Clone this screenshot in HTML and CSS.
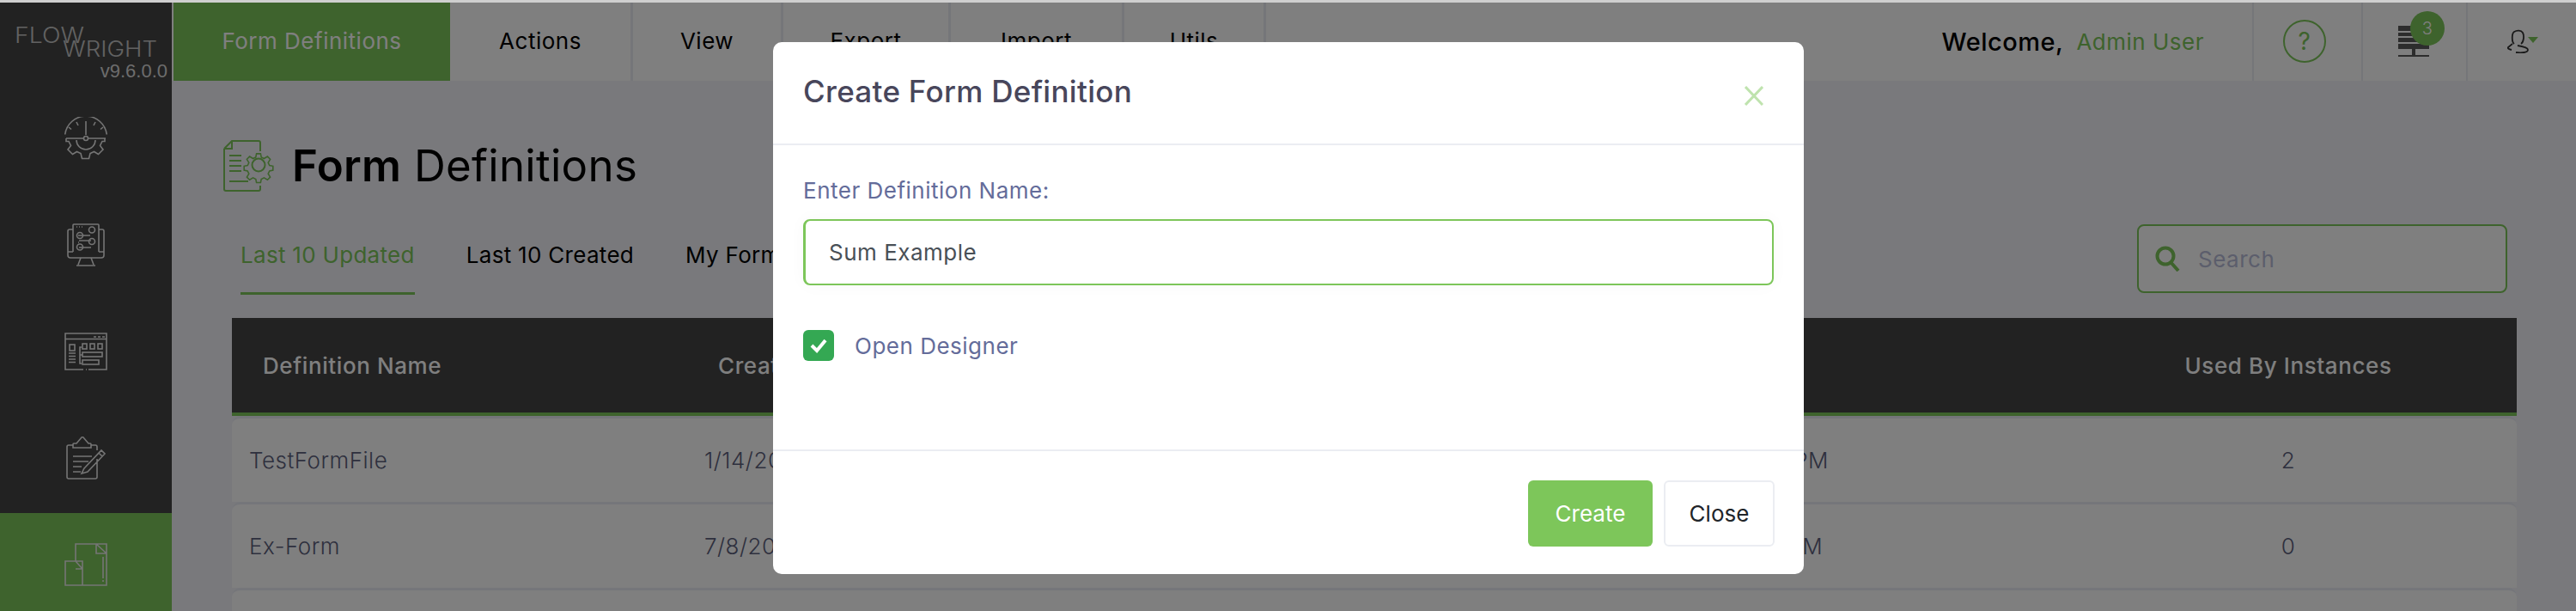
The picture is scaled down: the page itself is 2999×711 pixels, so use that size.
FILE: index.html
```html
<!DOCTYPE html>
<html lang="en">
<head>
<meta charset="utf-8">
<title>Form Definitions</title>
<link rel="stylesheet" href="styles.css">
</head>
<body>
<div class="strip"></div>
<div class="app">
  <aside class="sidebar">
    <div class="logo">
      <svg class="logo-mark" width="190" height="68" viewBox="0 0 190 68"><text x="17" y="41" textLength="81" lengthAdjust="spacingAndGlyphs">FLOW</text><text x="73" y="57" textLength="110" lengthAdjust="spacingAndGlyphs">WRIGHT</text></svg>
      <div class="version">v9.6.0.0</div>
    </div>
    <nav class="side-nav">
      <a class="side-item">
        <svg class="side-icon" width="50" height="50" viewBox="0 0 50 50"><path d="M.7 20.500A24.500 24.500 0 0 1 49.300 20.500M25 5v16M14 6l2 4M36 6l-2 4M5 12l3 2.500M45 12l-3 2.500M2 25h20M28 25h20M2 25v3.500h3l2.500 5-3.500 4.500 5.500 5.500 5-3 4.500 2 1.500 6h8l1.500-6 4.500-2 5 3 5.500-5.500-3.500-4.500 2.500-5h3V25M14 27a11 11 0 0 0 22 0"/><circle cx="25" cy="25" r="2.500"/></svg>
      </a>
      <a class="side-item">
        <svg class="side-icon" width="44" height="50" viewBox="0 0 44 50"><path d="M7 7H3Q1 7 1 9v28q0 3 3 3h36q3 0 3-3V9q0-2-2-2h-4M1 33h6M37 33h6M7 33V2q0-1 1-1h28q1 0 1 1v31M16 40l-3 8M28 40l3 8M11 49h22M11 4h1M14 4h1M17 4h1M13 14h14M14 20h14M14 22h-1M27 20H14M14 28h14M14 28M18 28h10"/><circle cx="29" cy="7.500" r="3.500"/><circle cx="15" cy="14" r="3.500"/><circle cx="29" cy="21" r="3.500"/><circle cx="15" cy="27.500" r="3.500"/></svg>
      </a>
      <a class="side-item">
        <svg class="side-icon" width="50" height="44" viewBox="0 0 50 44"><path d="M22 43H1V1h48v42H28M1 7.500h48M34 5h3M39 5h3M44 5h3M25 43h1M5 24h8M5 27.500h8M5 31h8M5 34.500h8M20 17h-2v19h2M18 26h3"/><rect x="6" y="14" width="6" height="7"/><rect x="21" y="13" width="5" height="6"/><rect x="30" y="13" width="5" height="6"/><rect x="39" y="13" width="5" height="6"/><rect x="21" y="23" width="23" height="5"/><rect x="21" y="32" width="19" height="5"/></svg>
      </a>
      <a class="side-item">
        <svg class="side-icon" width="46" height="50" viewBox="0 0 46 50"><path d="M8 10H3q-2 0-2 2v35q0 2 2 2h31q2 0 2-2V26M36 16v-4q0-2-2-2h-5M8 13V9q0-1 1-1h3l6-7q1-1 2 0l6 7h2q1 0 1 1v4zM8 23h22M8 29h18M8 35h10M8 41h9M21 37l20-21 4 4-20 21-7 2zM38 19l4 4"/></svg>
      </a>
      <a class="side-item side-item-active">
        <svg class="side-icon" width="50" height="50" viewBox="0 0 50 50"><path d="M13 21V1h36v48H1V21h20v28M37 1v11h12M37 1l12 11M21 21v9h-8M13 21l8 9M45 16v25M45 43v2"/></svg>
      </a>
    </nav>
  </aside>

  <div class="main">
    <header class="topbar">
      <nav class="tabs">
        <a class="tab tab-active">Form Definitions</a>
        <a class="tab">Actions</a>
        <a class="tab">View</a>
        <a class="tab">Export</a>
        <a class="tab">Import</a>
        <a class="tab">Utils</a>
      </nav>
      <div class="user-area">
        <div class="welcome"><span class="welcome-word">Welcome,</span><span class="welcome-name">Admin User</span></div>
        <div class="tool tool-help"><span class="help-ring">?</span></div>
        <div class="tool tool-server">
          <svg width="36" height="36" viewBox="0 0 36 36"><path class="server" d="M0 0h36v6H0zM0 8h36v4H0zM0 14h36v5H0zM0 21h36v6H0zM16 27h4v7h-4zM0 34h36v2H0z"/></svg>
          <span class="badge">3</span>
        </div>
        <div class="tool tool-user">
          <svg width="36" height="28" viewBox="0 0 36 28"><path class="user-line" d="M8 17C5 15 5 5 8 3c3-2 8-2 10 1 2 4 1 11-2 13M6 17l-5 4q-1 2 4 3M12 19c6 1 12 3 12 5 0 3-7 4-14 3"/><path class="caret" d="M24 9h12l-6 7z"/></svg>
        </div>
      </div>
    </header>

    <section class="content">
      <div class="page-head">
        <svg class="page-icon" width="60" height="60" viewBox="0 0 60 60"><path d="M1 10 10 1h31q2 0 2 2v10M1 10v47q0 2 2 2h38q2 0 2-2v-4M1 10h9V1M7 18h14M7 24h14M7 30h14M7 36h14M7 48h22"/><path d="M37 13h6l1 5 4 2 5-3 4 4-3 5 2 4 5 1v6l-5 1-2 4 3 5-4 4-5-3-4 2-1 5h-6l-1-5-4-2-5 3-4-4 3-5-2-4-5-1v-6l5-1 2-4-3-5 4-4 5 3 4-2z" transform="translate(9 5.500) scale(.8)"/><circle cx="41" cy="29" r="7.500"/></svg>
        <h1 class="page-title"><b>Form</b> Definitions</h1>
      </div>
      <div class="filter-row">
        <nav class="filters">
          <a class="filter filter-active">Last 10 Updated</a>
          <a class="filter">Last 10 Created</a>
          <a class="filter">My Forms</a>
        </nav>
        <div class="search">
          <svg width="30" height="30" viewBox="0 0 30 30"><circle cx="12" cy="12" r="9.500"/><path d="M18 19l9 10"/></svg>
          <span class="search-text">Search</span>
        </div>
      </div>
      <div class="table">
        <div class="thead">
          <div>Definition Name</div>
          <div>Created Date</div>
          <div>Last Updated</div>
          <div class="center">Used By Instances</div>
        </div>
        <div class="row">
          <div>TestFormFile</div>
          <div>1/14/2021 3:12:45 PM</div>
          <div>1/14/2021 3:12:45 PM</div>
          <div class="center">2</div>
        </div>
        <div class="row">
          <div>Ex-Form</div>
          <div>7/8/2020 1:16:24 PM</div>
          <div>7/8/2020 1:16:24 PM</div>
          <div class="center">0</div>
        </div>
        <div class="row"></div>
      </div>
    </section>
  </div>

  <div class="overlay">
    <div class="modal">
      <div class="modal-head">
        <h2 class="modal-title">Create Form Definition</h2>
        <svg class="modal-close" width="22" height="23" viewBox="0 0 22 23"><path d="M1 1l20 21M21 1L1 22"/></svg>
      </div>
      <div class="modal-body">
        <label class="field-label">Enter Definition Name:</label>
        <div class="field">Sum Example</div>
        <div class="check-row">
          <span class="check-box"><svg width="22" height="18" viewBox="0 0 22 18"><path d="M3 9l6 6L19 3"/></svg></span>
          <span class="check-label">Open Designer</span>
        </div>
      </div>
      <div class="modal-foot">
        <a class="btn btn-create">Create</a>
        <a class="btn btn-close">Close</a>
      </div>
    </div>
  </div>
</div>
</body>
</html>
```

FILE: styles.css
```css
* { box-sizing: border-box; }
html, body { margin: 0; height: 100%; overflow: hidden; }
body { display: flex; flex-direction: column; font-family: "Inter", "Liberation Sans", sans-serif; font-size: 26px; letter-spacing: .5px; background: #f2f3f8; color: #646c9a; }
.strip { height: 3px; flex: none; background: #cfcfcf; }
.app { position: relative; flex: 1; display: flex; min-height: 0; overflow: hidden; }

/* sidebar */
.sidebar { width: 200px; flex: none; background: #444; display: flex; flex-direction: column; overflow: hidden; }
.logo { height: 98px; flex: none; padding: 6px 5px 0 0; }
.logo-mark { display: block; height: 68px; }
.logo-mark text { font-size: 25px; font-weight: 300; letter-spacing: 0; fill: #c4c4c4; }
.version { font-family: "Liberation Sans", sans-serif; font-size: 22px; letter-spacing: 0; line-height: 26px; margin-top: -7px; text-align: right; color: #d8d8d8; }
.side-nav { flex: none; }
.side-item { display: flex; justify-content: center; align-items: center; height: 124px; padding-bottom: 4px; }
.side-item-active { background: #7dc65a; }
.side-icon { fill: none; stroke: #eaeaea; stroke-width: 1.6; }

/* top bar */
.main { flex: 1; min-width: 0; display: flex; flex-direction: column; padding-left: 1px; }
.topbar { height: 91px; flex: none; display: flex; justify-content: space-between; background: #fff; margin-left: -1px; padding-left: 2px; }
.tabs { display: grid; grid-template-columns: 322px 213px 175px 195px 202px 165px; }
.tab { display: flex; align-items: center; justify-content: center; color: #000; border-right: 3px solid #ebedf2; padding-bottom: 2px; }
.tab-active { background: #7dc65a; color: #fff; border-right: 0; }
.user-area { display: flex; align-items: stretch; }
.welcome { display: flex; align-items: center; gap: 15px; padding-right: 56px; }
.welcome-word { color: #000; font-weight: 500; font-size: 29px; }
.welcome-name { color: #7dc65a; font-size: 26px; }
.tool { position: relative; display: flex; align-items: flex-start; border-left: 2px solid #ebedf2; }
.tool-help { width: 127px; padding: 20px 0 0 34px; }
.tool-server { width: 122px; padding: 27px 0 0 41px; }
.tool-user { width: 128px; padding: 31px 0 0 46px; }
.help-ring { width: 50px; height: 50px; border: 2.500px solid #7dc65a; border-radius: 50%; color: #7dc65a; display: flex; align-items: center; justify-content: center; font-size: 28px; line-height: 1; }
.server { fill: #5a5a5a; }
.badge { position: absolute; left: 55px; top: 10px; width: 40px; height: 40px; border-radius: 50%; background: #7dc65a; color: #fff; font-size: 20px; display: flex; align-items: center; justify-content: center; font-weight: 300; }
.user-line { fill: none; stroke: #333; stroke-width: 1.800; }
.caret { fill: #7dc65a; }

/* content */
.content { flex: 1; min-height: 0; padding: 0 69px 0 69px; }
.page-head { display: flex; align-items: center; gap: 20px; height: 60px; margin: 69px 0 0 -10px; }
.page-icon { fill: none; stroke: #7dc65a; stroke-width: 2; flex: none; }
.page-title { margin: 0; font-size: 51px; letter-spacing: .3px; font-weight: 400; color: #000; line-height: 60px; }
.page-title b { font-weight: 600; }
.filter-row { display: flex; justify-content: space-between; align-items: flex-start; height: 147px; padding-top: 38px; }
.filters { display: flex; gap: 60px; padding-left: 10px; letter-spacing: .3px; }
.filter { color: #000; height: 82px; padding-top: 20px; }
.filter-active { color: #7dc65a; border-bottom: 3px solid #7dc65a; }
.search { width: 431px; height: 80px; margin-right: 11px; border: 2px solid #7dc65a; border-radius: 8px; background: #fff; display: flex; align-items: center; gap: 20px; padding-left: 19px; }
.search svg { fill: none; stroke: #7dc65a; stroke-width: 4; }
.search-text { color: #b8bdd8; }

/* table */
.table { width: 2660px; }
.thead, .row { display: grid; grid-template-columns: 530px 1043px 555px 532px; align-items: center; }
.thead { height: 114px; background: #444; border-bottom: 4px solid #7dc65a; color: #fff; font-weight: 500; letter-spacing: .6px; }
.thead > div { padding-left: 36px; }
.thead > .center, .row > .center { padding-left: 0; text-align: center; }
.row { height: 100px; background: #fff; border-top: 3px solid #ebecf5; border-radius: 10px 10px 0 0; font-weight: 300; color: #5c607c; }
.row > div { padding-left: 20px; white-space: nowrap; }

/* modal */
.overlay { position: absolute; inset: 0; background: rgba(0,0,0,.5); padding-top: 46px; display: flex; justify-content: center; }
.modal { width: 1200px; height: 619px; background: #fff; border-radius: 10px; display: flex; flex-direction: column; margin-left: 1px; }
.modal-head { height: 120px; flex: none; border-bottom: 2px solid #ebedf2; display: flex; justify-content: space-between; padding: 0 47px 0 35px; align-items: center; }
.modal-title { margin: 0; font-size: 35px; letter-spacing: .3px; font-weight: 500; color: #48465b; position: relative; top: -2px; }
.modal-close { fill: none; stroke: #bfe3ae; stroke-width: 3; position: relative; top: 3px; }
.modal-body { flex: 1; padding: 38px 35px 0; }
.field-label { display: block; line-height: 30px; height: 48px; color: #646c9a; }
.field { height: 77px; border: 2px solid #7dc65a; border-left-width: 3px; border-radius: 8px; display: flex; align-items: center; padding-left: 27px; color: #495057; box-shadow: 0 0 20px rgba(0,0,0,.03); }
.check-row { display: flex; align-items: center; gap: 24px; margin-top: 52px; }
.check-box { width: 36px; height: 36px; border-radius: 6px; background: #34a853; display: flex; align-items: center; justify-content: center; }
.check-box svg { fill: none; stroke: #fff; stroke-width: 4; }
.check-label { color: #646c9a; }
.modal-foot { height: 145px; flex: none; border-top: 2px solid #ebedf2; display: flex; justify-content: flex-end; gap: 13px; padding: 34px 34px 0 0; }
.btn { height: 77px; display: flex; align-items: center; justify-content: center; border-radius: 6px; letter-spacing: 0; }
.btn-create { width: 145px; background: #7dc65a; color: #fff; }
.btn-close { width: 129px; border: 2px solid #ebedf2; color: #212529; }
```
